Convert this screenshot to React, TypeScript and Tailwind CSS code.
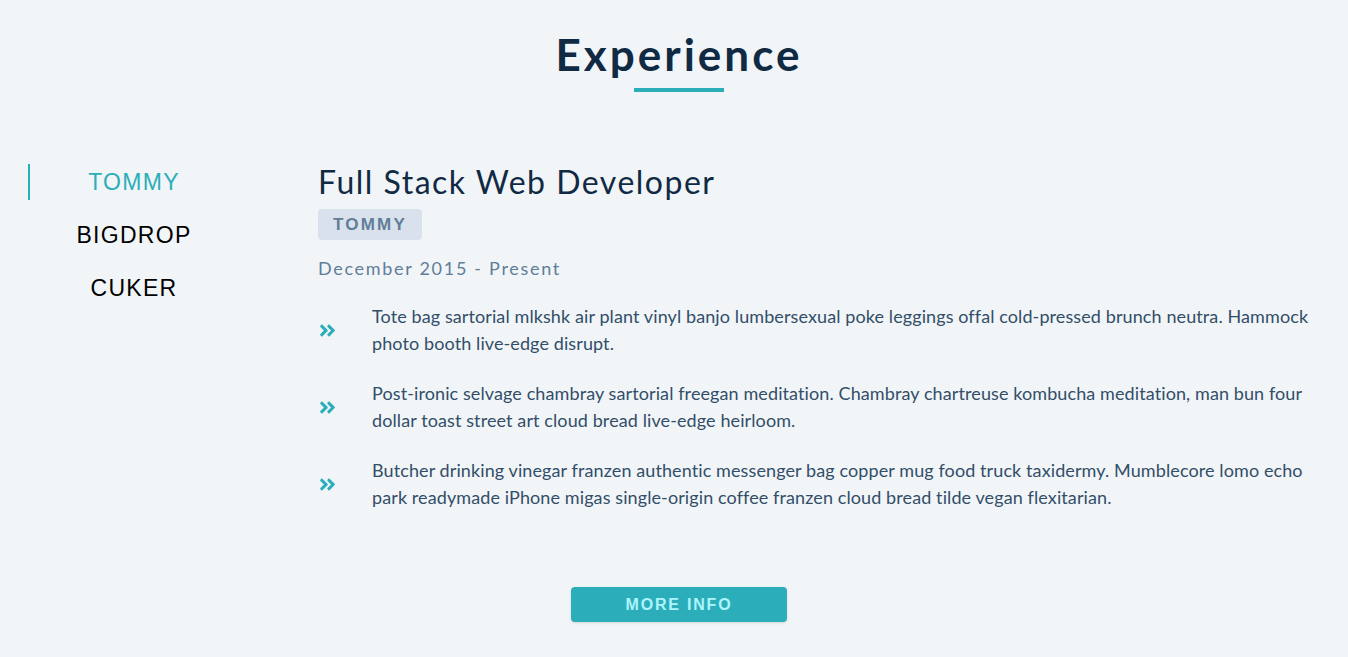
import { FaAngleDoubleRight } from "react-icons/fa";

const jobs = ["TOMMY", "BIGDROP", "CUKER"];

const duties = [
  "Tote bag sartorial mlkshk air plant vinyl banjo lumbersexual poke leggings offal cold-pressed brunch neutra. Hammock photo booth live-edge disrupt.",
  "Post-ironic selvage chambray sartorial freegan meditation. Chambray chartreuse kombucha meditation, man bun four dollar toast street art cloud bread live-edge heirloom.",
  "Butcher drinking vinegar franzen authentic messenger bag copper mug food truck taxidermy. Mumblecore lomo echo park readymade iPhone migas single-origin coffee franzen cloud bread tilde vegan flexitarian.",
];

export default function App() {
  return (
    <section className="min-h-[657px] bg-[#f1f5f8] font-['Lato',sans-serif] pt-[26px]">
      <div className="flex flex-col items-center pl-[10px]">
        <h2 className="text-[44px] leading-[56px] font-bold tracking-[3px] text-[#102a43]">
          Experience
        </h2>
        <div className="w-[90px] h-1 bg-[#2caeba] mt-[6px]" />
      </div>

      <div className="flex mt-[72px] pl-[28px] pr-[28px]">
        <div className="w-[210px] flex flex-col shrink-0 font-['Liberation_Sans',sans-serif]">
          {jobs.map((job, i) => (
            <button
              key={job}
              className={
                i === 0
                  ? "h-[36px] mb-[17px] border-l-2 border-[#2caeba] text-[#2caeba] text-[23px] tracking-[1.3px] text-center"
                  : "h-[36px] mb-[17px] border-l-2 border-transparent text-black text-[23px] tracking-[1.3px] text-center"
              }
            >
              {job}
            </button>
          ))}
        </div>

        <article className="ml-[80px] flex-1">
          <h3 className="text-[32px] leading-[36px] tracking-[1.5px] text-[#102a43]">
            Full Stack Web Developer
          </h3>
          <h4 className="inline-block mt-[9px] px-[15px] py-[4px] rounded bg-[#d9e2ec] text-[#617d98] font-bold text-[17px] leading-[23px] tracking-[2.2px] font-['Liberation_Sans',sans-serif]">
            TOMMY
          </h4>
          <p className="mt-[16px] text-[18px] leading-[24px] tracking-[1.7px] text-[#617d98]">
            December 2015 - Present
          </p>
          <div className="mt-[23px] flex flex-col gap-[23px]">
            {duties.map((d) => (
              <div key={d} className="flex items-center">
                <FaAngleDoubleRight className="w-[19px] h-[19px] text-[#2caeba] shrink-0" />
                <p className="ml-[35px] text-[18px] leading-[27px] tracking-[0.1px] text-[#334e68]">
                  {d}
                </p>
              </div>
            ))}
          </div>
        </article>
      </div>

      <div className="flex justify-center mt-[76px] pb-[35px] pl-[10px]">
        <button className="w-[216px] h-[35px] rounded bg-[#2caeba] text-[#aef4fd] font-bold text-[16px] tracking-[1.8px] font-['Liberation_Sans',sans-serif] shadow-sm">
          MORE INFO
        </button>
      </div>
    </section>
  );
}
